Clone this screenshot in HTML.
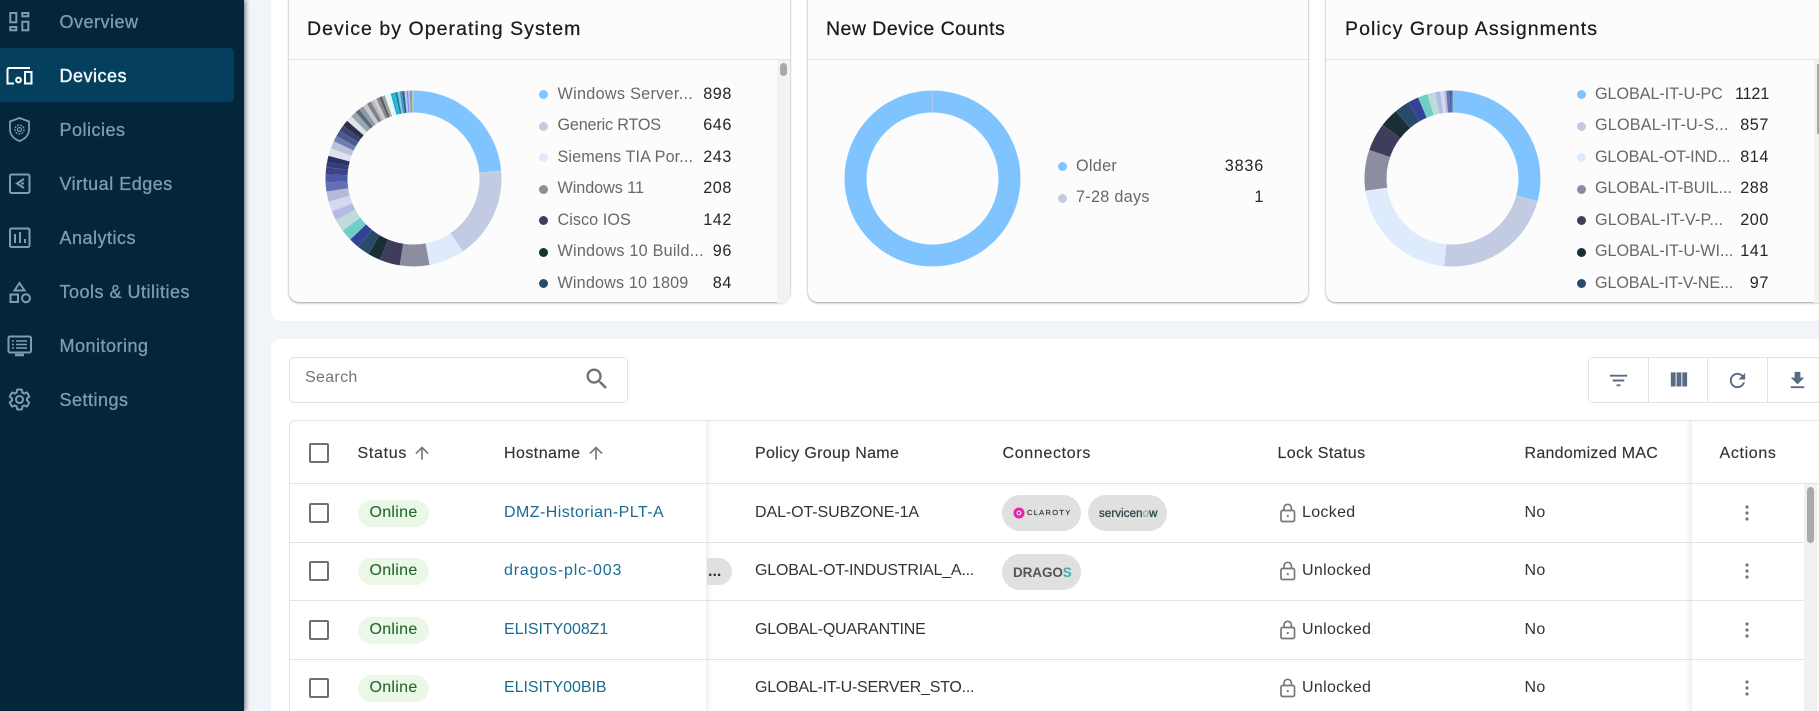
<!DOCTYPE html>
<html><head><meta charset="utf-8"><title>Devices</title>
<style>
html,body{margin:0;padding:0;width:1819px;height:711px;overflow:hidden;background:#f1f5f9;font-family:"Liberation Sans",sans-serif}
#r{position:relative;width:1819px;height:711px;overflow:hidden;background:#f1f5f9}
.a{position:absolute}
.t{position:absolute;white-space:nowrap;line-height:20px;font-size:16px;letter-spacing:.32px;color:#333}
.n{font-size:18px;letter-spacing:.5px;color:#7e9db1;left:59.5px;-webkit-text-stroke:.3px #7e9db1}
.h{font-size:19.5px;color:#1b1b1b;top:19px;-webkit-text-stroke:.25px #1b1b1b}
.l{color:#686868;font-size:16.2px;letter-spacing:.3px}
.v{color:#262626;font-size:16.2px;letter-spacing:.6px;text-align:right}
.d{position:absolute;width:9px;height:9px;border-radius:50%}
.card{position:absolute;top:-20px;height:322px;background:#fcfcfc;border-radius:10px;box-shadow:0 1px 2px rgba(0,0,0,.38),0 0 1px rgba(0,0,0,.08)}
.hr{position:absolute;height:1px;background:#e3e3e3}
.th{-webkit-text-stroke:.15px #333;top:443.5px}
.cb{position:absolute;left:309px;width:16px;height:16px;border:2px solid #707070;border-radius:2px}
.p{position:absolute;left:358px;width:71px;height:27px;border-radius:14px;background:#ebf7e7;color:#22692f;font-size:16px;letter-spacing:.3px;line-height:26px;text-align:center;-webkit-text-stroke:.1px #22692f}
.lk{color:#1c6a93}
.chip{position:absolute;height:36px;width:79px;border-radius:18px;background:#e0e0e0}
svg{position:absolute;overflow:visible}
</style></head><body><div id="r">

<!-- main panels -->
<div class="a" style="left:271px;top:-20px;width:1560px;height:341px;background:#fff;border-radius:10px"></div>
<div class="a" style="left:271px;top:339px;width:1560px;height:400px;background:#fff;border-radius:10px"></div>

<!-- sidebar -->
<div class="a" style="left:0;top:0;width:244px;height:711px;background:#04263a;box-shadow:2px 0 4px rgba(0,0,0,.45)"></div>
<div class="a" style="left:0;top:48px;width:234px;height:54px;background:#053f5e;border-radius:0 5px 5px 0"></div>
<div class="t n" style="top:12px">Overview</div>
<div class="t n" style="top:66px;color:#f1f5f8;-webkit-text-stroke:.45px #f1f5f8">Devices</div>
<div class="t n" style="top:120px">Policies</div>
<div class="t n" style="top:174px">Virtual Edges</div>
<div class="t n" style="top:228px">Analytics</div>
<div class="t n" style="top:282px">Tools &amp; Utilities</div>
<div class="t n" style="top:336px">Monitoring</div>
<div class="t n" style="top:390px">Settings</div>
<svg style="left:0;top:0" width="40" height="420" fill="none" stroke="#7e9db1" stroke-width="2">
 <rect x="10.3" y="13" width="6" height="9.300"/><rect x="10.3" y="27" width="6" height="3.300"/><rect x="22.300" y="13" width="6" height="3.300"/><rect x="22.300" y="21.700" width="6" height="8.600"/>
 <g stroke="#fff"><path d="M30 68H9a1.500 1.500 0 0 0-1.500 1.500V83.500H14"/><circle cx="18.500" cy="80" r="2.400"/><rect x="25" y="72" width="6.500" height="11.500"/></g>
 <path d="M19.500 118l9.500 3.500v8c0 5.500-4 9.500-9.500 11.500C14 139 10 135 10 129.500v-8z" stroke-width="1.800"/>
 <circle cx="19.500" cy="129.500" r="2" stroke-width="1.200"/><circle cx="19.500" cy="129.500" r="4.500" stroke-width="1.300" stroke-dasharray="2 1.100"/>
 <rect x="10" y="174.500" width="19.500" height="18.500" rx="1.500"/><path d="M24 179l-7 4.500 7 4.500M24 183.500h-3"/>
 <rect x="10" y="228.500" width="19.500" height="18.500" rx="1.500"/><path d="M15 234v9M20 232v11M25 239v4"/>
 <path d="M19.500 283l5 7.500h-10z"/><rect x="10.500" y="294.500" width="7.500" height="7.500"/><circle cx="26" cy="298.200" r="4"/>
 <rect x="8.500" y="336.500" width="22.500" height="16" rx="1.500"/><path d="M12 341h2M16 341h11M12 344.500h2M16 344.500h11M12 348h2M16 348h11" stroke-width="1.500"/><path d="M15 355h9" stroke-width="2.500"/>
</svg>
<svg style="left:7px;top:387px" width="25" height="25" viewBox="0 0 24 24" fill="none" stroke="#7e9db1" stroke-width="1.900"><path d="M19.140 12.940c.04-.3.06-.61.06-.94 0-.32-.02-.64-.07-.94l2.030-1.580c.18-.14.23-.41.12-.61l-1.920-3.320c-.12-.22-.37-.29-.59-.22l-2.390.96c-.5-.38-1.030-.7-1.620-.94l-.36-2.540c-.04-.24-.24-.41-.48-.41h-3.840c-.24 0-.43.17-.47.41l-.36 2.540c-.59.24-1.130.57-1.620.94l-2.390-.96c-.22-.08-.47 0-.59.22L2.740 8.870c-.12.21-.08.47.12.61l2.030 1.580c-.05.3-.09.63-.09.94s.02.64.07.94l-2.030 1.580c-.18.14-.23.41-.12.61l1.920 3.320c.12.22.37.29.59.22l2.390-.96c.5.38 1.030.7 1.620.94l.36 2.540c.05.24.24.41.48.41h3.840c.24 0 .44-.17.47-.41l.36-2.540c.59-.24 1.130-.56 1.620-.94l2.390.96c.22.08.47 0 .59-.22l1.920-3.320c.12-.22.07-.47-.12-.61l-2.010-1.580z"/><circle cx="12" cy="12" r="3.400"/></svg>

<!-- cards -->
<div class="card" style="left:289px;width:501px"></div>
<div class="card" style="left:808px;width:500px"></div>
<div class="card" style="left:1326px;width:520px"></div>
<div class="hr" style="left:289px;top:59px;width:501px"></div>
<div class="hr" style="left:808px;top:59px;width:500px"></div>
<div class="hr" style="left:1326px;top:59px;width:493px"></div>
<div class="t h" style="left:307px;letter-spacing:1.05px">Device by Operating System</div>
<div class="t h" style="left:826px;letter-spacing:.47px">New Device Counts</div>
<div class="t h" style="left:1345px;letter-spacing:1.06px">Policy Group Assignments</div>

<!-- scrollbars in cards -->
<div class="a" style="left:777px;top:60px;width:13px;height:243px;background:#f2f2f2;border-radius:0 0 8px 0"></div>
<div class="a" style="left:780px;top:63px;width:7px;height:13px;background:#a9a9a9;border-radius:4px"></div>
<div class="a" style="left:1814px;top:60px;width:5px;height:243px;background:#f2f2f2"></div>
<div class="a" style="left:1817px;top:64px;width:2px;height:70px;background:#a9a9a9"></div>

<!-- donut 1 -->
<svg style="left:325px;top:90px" width="177" height="177" viewBox="-88.500 -88.500 177 177" fill="none" stroke-width="22">
<g transform="rotate(-90)">
<circle r="77" pathLength="360" stroke="#7fc4fe" stroke-dasharray="85 360"/>
<circle r="77" pathLength="360" stroke="#c3cbe3" stroke-dasharray="61 360" transform="rotate(85)"/>
<circle r="77" pathLength="360" stroke="#deebfd" stroke-dasharray="23.500 360" transform="rotate(146)"/>
<circle r="77" pathLength="360" stroke="#8c8d9f" stroke-dasharray="19.500 360" transform="rotate(169.500)"/>
<circle r="77" pathLength="360" stroke="#3e3d5c" stroke-dasharray="13.500 360" transform="rotate(189)"/>
<circle r="77" pathLength="360" stroke="#1a2e35" stroke-dasharray="8.500 360" transform="rotate(202.500)"/>
<circle r="77" pathLength="360" stroke="#2a4a6b" stroke-dasharray="8 360" transform="rotate(211)"/>
<circle r="77" pathLength="360" stroke="#334296" stroke-dasharray="7 360" transform="rotate(219)"/>
<circle r="77" pathLength="360" stroke="#6fcfc8" stroke-dasharray="7.700 360" transform="rotate(226)"/>
<circle r="77" pathLength="360" stroke="#c0dbd9" stroke-dasharray="8 360" transform="rotate(233.700)"/>
<circle r="77" pathLength="360" stroke="#b3bde3" stroke-dasharray="6.300 360" transform="rotate(241.700)"/>
<circle r="77" pathLength="360" stroke="#d3d8ee" stroke-dasharray="6.800 360" transform="rotate(248)"/>
<circle r="77" pathLength="360" stroke="#b5b9dc" stroke-dasharray="6.700 360" transform="rotate(254.800)"/>
<circle r="77" pathLength="360" stroke="#656fb5" stroke-dasharray="6 360" transform="rotate(261.500)"/>
<circle r="77" pathLength="360" stroke="#4d5aa8" stroke-dasharray="5.300 360" transform="rotate(267.500)"/>
<circle r="77" pathLength="360" stroke="#3b4484" stroke-dasharray="4.600 360" transform="rotate(272.800)"/>
<circle r="77" pathLength="360" stroke="#343d7a" stroke-dasharray="3.600 360" transform="rotate(277.400)"/>
<circle r="77" pathLength="360" stroke="#2b3263" stroke-dasharray="4 360" transform="rotate(281)"/>
<circle r="77" pathLength="360" stroke="#e0e2ee" stroke-dasharray="5 360" transform="rotate(285)"/>
<circle r="77" pathLength="360" stroke="#bcc2d8" stroke-dasharray="5 360" transform="rotate(290)"/>
<circle r="77" pathLength="360" stroke="#6f7db0" stroke-dasharray="4 360" transform="rotate(295)"/>
<circle r="77" pathLength="360" stroke="#4a5a90" stroke-dasharray="4 360" transform="rotate(299)"/>
<circle r="77" pathLength="360" stroke="#3a4470" stroke-dasharray="4 360" transform="rotate(303)"/>
<circle r="77" pathLength="360" stroke="#2a2f50" stroke-dasharray="4 360" transform="rotate(307)"/>
<circle r="77" pathLength="360" stroke="#dfe3ea" stroke-dasharray="4 360" transform="rotate(311)"/>
<circle r="77" pathLength="360" stroke="#9aa5ad" stroke-dasharray="4 360" transform="rotate(315)"/>
<circle r="77" pathLength="360" stroke="#5b6a78" stroke-dasharray="3 360" transform="rotate(319)"/>
<circle r="77" pathLength="360" stroke="#8d99a3" stroke-dasharray="3 360" transform="rotate(322)"/>
<circle r="77" pathLength="360" stroke="#c5c8cc" stroke-dasharray="3 360" transform="rotate(325)"/>
<circle r="77" pathLength="360" stroke="#7e838a" stroke-dasharray="3 360" transform="rotate(328)"/>
<circle r="77" pathLength="360" stroke="#b8bbbe" stroke-dasharray="2 360" transform="rotate(331)"/>
<circle r="77" pathLength="360" stroke="#d0d0d0" stroke-dasharray="2 360" transform="rotate(333)"/>
<circle r="77" pathLength="360" stroke="#8a8a90" stroke-dasharray="2 360" transform="rotate(335)"/>
<circle r="77" pathLength="360" stroke="#5c5f66" stroke-dasharray="2 360" transform="rotate(337)"/>
<circle r="77" pathLength="360" stroke="#a0a2a8" stroke-dasharray="2 360" transform="rotate(339)"/>
<circle r="77" pathLength="360" stroke="#e8f7f5" stroke-dasharray="2 360" transform="rotate(341)"/>
<circle r="77" pathLength="360" stroke="#d8fbf8" stroke-dasharray="2 360" transform="rotate(343)"/>
<circle r="77" pathLength="360" stroke="#1ea8d0" stroke-dasharray="1.500 360" transform="rotate(345)"/>
<circle r="77" pathLength="360" stroke="#18c0e0" stroke-dasharray="1.500 360" transform="rotate(346.500)"/>
<circle r="77" pathLength="360" stroke="#2a7a9a" stroke-dasharray="1.500 360" transform="rotate(348)"/>
<circle r="77" pathLength="360" stroke="#6fd0ea" stroke-dasharray="1.500 360" transform="rotate(349.500)"/>
<circle r="77" pathLength="360" stroke="#4a8ec0" stroke-dasharray="1.500 360" transform="rotate(351)"/>
<circle r="77" pathLength="360" stroke="#2d5d86" stroke-dasharray="1.500 360" transform="rotate(352.500)"/>
<circle r="77" pathLength="360" stroke="#a7c8f0" stroke-dasharray="1.500 360" transform="rotate(354)"/>
<circle r="77" pathLength="360" stroke="#7890e8" stroke-dasharray="1 360" transform="rotate(355.500)"/>
<circle r="77" pathLength="360" stroke="#b5c0e8" stroke-dasharray="1 360" transform="rotate(356.500)"/>
<circle r="77" pathLength="360" stroke="#8a9ba0" stroke-dasharray="1.500 360" transform="rotate(357.500)"/>
<circle r="77" pathLength="360" stroke="#c0c8c0" stroke-dasharray="1 360" transform="rotate(359)"/>
</g></svg>

<!-- donut 2 -->
<svg style="left:844px;top:90px" width="177" height="177" viewBox="-88.500 -88.500 177 177" fill="none" stroke-width="22">
<circle r="77" stroke="#7fc4fe"/>
<path d="M0-88V-66" stroke="#c3cbe3" stroke-width=".6"/>
</svg>

<!-- donut 3 -->
<svg style="left:1363.500px;top:90px" width="177" height="177" viewBox="-88.500 -88.500 177 177" fill="none" stroke-width="22">
<g transform="rotate(-90)">
<circle r="77" pathLength="360" stroke="#7fc4fe" stroke-dasharray="105 360"/>
<circle r="77" pathLength="360" stroke="#c3cbe3" stroke-dasharray="80.500 360" transform="rotate(105)"/>
<circle r="77" pathLength="360" stroke="#deebfd" stroke-dasharray="76.500 360" transform="rotate(185.500)"/>
<circle r="77" pathLength="360" stroke="#8c8d9f" stroke-dasharray="27 360" transform="rotate(262)"/>
<circle r="77" pathLength="360" stroke="#3e3d5c" stroke-dasharray="18.500 360" transform="rotate(289)"/>
<circle r="77" pathLength="360" stroke="#1a2e35" stroke-dasharray="12.500 360" transform="rotate(307.500)"/>
<circle r="77" pathLength="360" stroke="#2a4a6b" stroke-dasharray="10 360" transform="rotate(320)"/>
<circle r="77" pathLength="360" stroke="#334296" stroke-dasharray="7 360" transform="rotate(330)"/>
<circle r="77" pathLength="360" stroke="#6fcfc8" stroke-dasharray="6.500 360" transform="rotate(337)"/>
<circle r="77" pathLength="360" stroke="#c0dbd9" stroke-dasharray="5.100 360" transform="rotate(343.500)"/>
<circle r="77" pathLength="360" stroke="#b3bde3" stroke-dasharray="3.400 360" transform="rotate(348.600)"/>
<circle r="77" pathLength="360" stroke="#d3d8ee" stroke-dasharray="2.500 360" transform="rotate(352)"/>
<circle r="77" pathLength="360" stroke="#b5b9dc" stroke-dasharray="1.500 360" transform="rotate(354.500)"/>
<circle r="77" pathLength="360" stroke="#656fb5" stroke-dasharray="2 360" transform="rotate(356)"/>
<circle r="77" pathLength="360" stroke="#4d5aa8" stroke-dasharray="1 360" transform="rotate(358)"/>
<circle r="77" pathLength="360" stroke="#666" stroke-dasharray="1 360" transform="rotate(359)"/>
</g></svg>

<!-- legend 1 -->
<span class="d" style="left:539px;top:90px;background:#7fc4fe"></span><div class="t l" style="left:557.500px;top:84px">Windows Server...</div><div class="t v" style="right:1087px;top:84px">898</div>
<span class="d" style="left:539px;top:121.500px;background:#c3cbe3"></span><div class="t l" style="left:557.500px;top:115px;letter-spacing:-.18px">Generic RTOS</div><div class="t v" style="right:1087px;top:115px">646</div>
<span class="d" style="left:539px;top:153px;background:#deebfd"></span><div class="t l" style="left:557.500px;top:147px;letter-spacing:.1px">Siemens TIA Por...</div><div class="t v" style="right:1087px;top:147px">243</div>
<span class="d" style="left:539px;top:185px;background:#8c8d9f"></span><div class="t l" style="left:557.500px;top:178px;letter-spacing:-.05px">Windows 11</div><div class="t v" style="right:1087px;top:178px">208</div>
<span class="d" style="left:539px;top:216px;background:#3e3d5c"></span><div class="t l" style="left:557.500px;top:210px;letter-spacing:.05px">Cisco IOS</div><div class="t v" style="right:1087px;top:210px">142</div>
<span class="d" style="left:539px;top:248px;background:#1a2e35"></span><div class="t l" style="left:557.500px;top:241px;letter-spacing:.22px">Windows 10 Build...</div><div class="t v" style="right:1087px;top:241px">96</div>
<span class="d" style="left:539px;top:279px;background:#2a4a6b"></span><div class="t l" style="left:557.500px;top:273px;letter-spacing:.15px">Windows 10 1809</div><div class="t v" style="right:1087px;top:273px">84</div>

<!-- legend 2 -->
<span class="d" style="left:1058px;top:162px;background:#7fc4fe"></span><div class="t l" style="left:1076px;top:156px">Older</div><div class="t v" style="right:555px;top:156px;letter-spacing:.8px">3836</div>
<span class="d" style="left:1058px;top:193.500px;background:#c3cbe3"></span><div class="t l" style="left:1076px;top:187px">7-28 days</div><div class="t v" style="right:555px;top:187px">1</div>

<!-- legend 3 -->
<span class="d" style="left:1577px;top:90px;background:#7fc4fe"></span><div class="t l" style="left:1595px;top:84px;letter-spacing:-.06px">GLOBAL-IT-U-PC</div><div class="t v" style="right:50px;top:84px;letter-spacing:-.2px">1121</div>
<span class="d" style="left:1577px;top:121.500px;background:#c3cbe3"></span><div class="t l" style="left:1595px;top:115px;letter-spacing:.2px">GLOBAL-IT-U-S...</div><div class="t v" style="right:50px;top:115px">857</div>
<span class="d" style="left:1577px;top:153px;background:#deebfd"></span><div class="t l" style="left:1595px;top:147px;letter-spacing:-.2px">GLOBAL-OT-IND...</div><div class="t v" style="right:50px;top:147px">814</div>
<span class="d" style="left:1577px;top:185px;background:#8c8d9f"></span><div class="t l" style="left:1595px;top:178px;letter-spacing:-.1px">GLOBAL-IT-BUIL...</div><div class="t v" style="right:50px;top:178px">288</div>
<span class="d" style="left:1577px;top:216px;background:#3e3d5c"></span><div class="t l" style="left:1595px;top:210px;letter-spacing:.1px">GLOBAL-IT-V-P...</div><div class="t v" style="right:50px;top:210px">200</div>
<span class="d" style="left:1577px;top:248px;background:#1a2e35"></span><div class="t l" style="left:1595px;top:241px;letter-spacing:-.07px">GLOBAL-IT-U-WI...</div><div class="t v" style="right:50px;top:241px">141</div>
<span class="d" style="left:1577px;top:279px;background:#2a4a6b"></span><div class="t l" style="left:1595px;top:273px;letter-spacing:-.13px">GLOBAL-IT-V-NE...</div><div class="t v" style="right:50px;top:273px">97</div>

<!-- search -->
<div class="a" style="left:289px;top:357px;width:337px;height:44px;border:1px solid #e2e2e2;border-radius:5px"></div>
<div class="t" style="left:305px;top:368px;color:#757575">Search</div>
<svg style="left:583px;top:365px" width="28" height="28" viewBox="0 0 24 24" fill="#6f6f6f"><path d="M15.500 14h-.79l-.28-.27C15.410 12.590 16 11.110 16 9.500 16 5.910 13.090 3 9.500 3S3 5.910 3 9.500 5.910 16 9.500 16c1.610 0 3.090-.59 4.230-1.570l.27.28v.79l5 4.990L20.490 19l-4.990-5zm-6 0C7.010 14 5 11.990 5 9.500S7.010 5 9.500 5 14 7.010 14 9.500 11.990 14 9.500 14z"/></svg>

<!-- toolbar -->
<div class="a" style="left:1588px;top:357px;width:240px;height:44px;border:1px solid #e2e2e2;border-radius:5px"></div>
<div class="a" style="left:1648px;top:357px;width:1px;height:45px;background:#e2e2e2"></div>
<div class="a" style="left:1707px;top:357px;width:1px;height:45px;background:#e2e2e2"></div>
<div class="a" style="left:1767px;top:357px;width:1px;height:45px;background:#e2e2e2"></div>
<svg style="left:1606.500px;top:368.500px" width="23" height="23" viewBox="0 0 24 24" fill="#5a6b85"><path d="M10 18h4v-2h-4v2zM3 6v2h18V6H3zm3 7h12v-2H6v2z"/></svg>
<svg style="left:1666.500px;top:367px" width="23" height="26" viewBox="0 0 24 24" preserveAspectRatio="none" fill="#5a6b85"><path d="M10 18h5V5h-5v13zm-6 0h5V5H4v13zM16 5v13h5V5h-5z"/></svg>
<svg style="left:1725.500px;top:368.500px" width="23" height="23" viewBox="0 0 24 24" fill="#5a6b85"><path d="M17.650 6.350C16.200 4.900 14.210 4 12 4c-4.420 0-7.990 3.580-7.990 8s3.570 8 7.990 8c3.730 0 6.840-2.550 7.730-6h-2.080c-.82 2.330-3.040 4-5.650 4-3.310 0-6-2.690-6-6s2.690-6 6-6c1.660 0 3.140.69 4.220 1.780L13 11h7V4l-2.350 2.350z"/></svg>
<svg style="left:1785.500px;top:368.500px" width="23" height="23" viewBox="0 0 24 24" fill="#5a6b85"><path d="M19 9h-4V3H9v6H5l7 7 7-7zM5 18v2h14v-2H5z"/></svg>

<!-- table frame -->
<div class="a" style="left:289px;top:420px;width:1560px;height:320px;border:1px solid #e4e4e4;border-radius:6px;box-sizing:border-box"></div>
<div class="hr" style="left:289px;top:483px;width:1530px"></div>
<div class="hr" style="left:289px;top:542px;width:1515px"></div>
<div class="hr" style="left:289px;top:600px;width:1515px"></div>
<div class="hr" style="left:289px;top:659px;width:1515px"></div>
<div class="a" style="left:706px;top:421px;width:6px;height:290px;background:linear-gradient(90deg,rgba(0,0,0,.05),rgba(0,0,0,0))"></div>
<div class="a" style="left:1685px;top:421px;width:6px;height:290px;background:linear-gradient(270deg,rgba(0,0,0,.05),rgba(0,0,0,0))"></div>
<div class="a" style="left:705.500px;top:421px;width:1px;height:290px;background:#eeeeee"></div>
<div class="a" style="left:1691px;top:421px;width:1px;height:290px;background:#eeeeee"></div>
<div class="a" style="left:1804px;top:484px;width:13px;height:227px;background:#f1f1f1"></div>
<div class="a" style="left:1807px;top:487px;width:7px;height:56px;background:#a9a9a9;border-radius:4px"></div>

<!-- header -->
<div class="cb" style="top:443px"></div>
<div class="t th" style="left:357.500px;letter-spacing:.7px">Status</div>
<svg style="left:412px;top:443px" width="20" height="20" viewBox="0 0 24 24" fill="#777"><path d="M4 12l1.410 1.410L11 7.830V20h2V7.830l5.580 5.590L20 12l-8-8-8 8z"/></svg>
<div class="t th" style="left:504px;letter-spacing:.45px">Hostname</div>
<svg style="left:586px;top:443px" width="20" height="20" viewBox="0 0 24 24" fill="#777"><path d="M4 12l1.410 1.410L11 7.830V20h2V7.830l5.580 5.590L20 12l-8-8-8 8z"/></svg>
<div class="t th" style="left:755px">Policy Group Name</div>
<div class="t th" style="left:1002.500px;letter-spacing:.67px">Connectors</div>
<div class="t th" style="left:1277.500px;letter-spacing:.4px">Lock Status</div>
<div class="t th" style="left:1524.500px;letter-spacing:.27px">Randomized MAC</div>
<div class="t th" style="left:1719.500px;letter-spacing:.65px">Actions</div>

<!-- rows -->
<div class="cb" style="top:503px"></div><div class="p" style="top:500px">Online</div><div class="t lk" style="left:504px;top:502.500px;letter-spacing:.44px">DMZ-Historian-PLT-A</div><div class="t" style="left:755px;top:502.500px;letter-spacing:-.08px">DAL-OT-SUBZONE-1A</div><div class="t" style="left:1302px;top:502.500px">Locked</div><div class="t" style="left:1524.500px;top:502.500px">No</div>
<div class="cb" style="top:561px"></div><div class="p" style="top:558px">Online</div><div class="t lk" style="left:504px;top:560.500px;letter-spacing:.82px">dragos-plc-003</div><div class="t" style="left:755px;top:560.500px;letter-spacing:-.2px">GLOBAL-OT-INDUSTRIAL_A...</div><div class="t" style="left:1302px;top:560.500px">Unlocked</div><div class="t" style="left:1524.500px;top:560.500px">No</div>
<div class="cb" style="top:620px"></div><div class="p" style="top:617px">Online</div><div class="t lk" style="left:504px;top:620px;letter-spacing:-.06px">ELISITY008Z1</div><div class="t" style="left:755px;top:620px;letter-spacing:-.22px">GLOBAL-QUARANTINE</div><div class="t" style="left:1302px;top:620px">Unlocked</div><div class="t" style="left:1524.500px;top:620px">No</div>
<div class="cb" style="top:678px"></div><div class="p" style="top:675px">Online</div><div class="t lk" style="left:504px;top:678px;letter-spacing:-.06px">ELISITY00BIB</div><div class="t" style="left:755px;top:678px;letter-spacing:-.24px">GLOBAL-IT-U-SERVER_STO...</div><div class="t" style="left:1302px;top:678px">Unlocked</div><div class="t" style="left:1524.500px;top:678px">No</div>

<!-- clipped chip -->
<div class="a" style="left:707px;top:558px;width:25px;height:27px;background:#e0e0e0;border-radius:0 14px 14px 0"></div>
<div class="t" style="left:708px;top:562px;font-size:16px;letter-spacing:0;font-weight:bold">...</div>

<!-- connector chips -->
<div class="chip" style="left:1002px;top:495px"></div>
<div class="chip" style="left:1088px;top:495px"></div>
<div class="chip" style="left:1002px;top:554px"></div>
<svg style="left:1013px;top:507px" width="12" height="12" fill="none"><circle cx="6" cy="6" r="4" stroke="#e81fb1" stroke-width="3"/><circle cx="6" cy="6" r="1.200" fill="#e81fb1"/></svg>
<div class="t" style="left:1027px;top:503px;font-size:7.500px;letter-spacing:1.300px;color:#2e2e2e;-webkit-text-stroke:.15px #2e2e2e">CLAROTY</div>
<div class="t" style="left:1099px;top:503.500px;font-size:11.500px;letter-spacing:.1px;color:#2f4a4c;-webkit-text-stroke:.35px #2f4a4c">servicen<span style="color:#7fbf9a;-webkit-text-stroke:.35px #7fbf9a">o</span>w</div>
<div class="t" style="left:1013px;top:562.500px;font-size:13.500px;letter-spacing:-.1px;color:#555;font-weight:bold">DRAGO<span style="color:#3fb0b0">S</span></div>

<!-- lock icons -->
<svg style="left:0;top:0" width="1819" height="711" fill="none" stroke="#777" stroke-width="1.700">
<g><rect x="1281" y="510.500" width="13.500" height="11" rx="1.500"/><path d="M1284 510.500v-2.500a3.700 3.700 0 0 1 7.400 0v2.500"/><circle cx="1287.800" cy="516" r="1.100" fill="#777" stroke="none"/></g>
<g transform="translate(0 58)"><rect x="1281" y="510.500" width="13.500" height="11" rx="1.500"/><path d="M1284 510.500v-2.500a3.700 3.700 0 0 1 7.400 0v2.500"/><circle cx="1287.800" cy="516" r="1.100" fill="#777" stroke="none"/></g>
<g transform="translate(0 117)"><rect x="1281" y="510.500" width="13.500" height="11" rx="1.500"/><path d="M1284 510.500v-2.500a3.700 3.700 0 0 1 7.400 0v2.500"/><circle cx="1287.800" cy="516" r="1.100" fill="#777" stroke="none"/></g>
<g transform="translate(0 175)"><rect x="1281" y="510.500" width="13.500" height="11" rx="1.500"/><path d="M1284 510.500v-2.500a3.700 3.700 0 0 1 7.400 0v2.500"/><circle cx="1287.800" cy="516" r="1.100" fill="#777" stroke="none"/></g>
<g fill="#767676" stroke="none">
<circle cx="1747" cy="507" r="1.600"/><circle cx="1747" cy="513" r="1.600"/><circle cx="1747" cy="519" r="1.600"/>
<circle cx="1747" cy="565" r="1.600"/><circle cx="1747" cy="571" r="1.600"/><circle cx="1747" cy="577" r="1.600"/>
<circle cx="1747" cy="624" r="1.600"/><circle cx="1747" cy="630" r="1.600"/><circle cx="1747" cy="636" r="1.600"/>
<circle cx="1747" cy="682" r="1.600"/><circle cx="1747" cy="688" r="1.600"/><circle cx="1747" cy="694" r="1.600"/>
</g>
</svg>
</div></body></html>
